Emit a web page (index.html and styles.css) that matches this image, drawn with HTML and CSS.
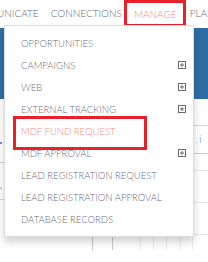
FILE: index.html
```html
<!DOCTYPE html>
<html>
<head>
<meta charset="utf-8">
<link rel="stylesheet" href="styles.css">
</head>
<body>
<div class="page">
  <nav class="topnav">
    <span class="nav-item first">UNICATE</span>
    <span class="nav-item">CONNECTIONS</span>
    <span class="nav-item active">MANAGE</span>
    <span class="nav-item">PLANS</span>
  </nav>
  <div class="banner"></div>
  <div class="content">
    <div class="col-left">
      <div class="lrow lr1"><span class="dot"></span></div>
      <div class="lrow lr2"><span class="caret">ʌ</span></div>
    </div>
    <div class="col-mid">
      <div class="mid-fill"></div>
      <div class="grid-row">
        <span class="cell c1"></span>
        <span class="cell c2 dark"></span>
        <span class="cell c3 dark"></span>
        <span class="cell c4"></span>
        <span class="cell c5"></span>
        <span class="cell c6"></span>
        <span class="cell c7"></span>
        <span class="cell c8"></span>
      </div>
    </div>
    <div class="col-right">
      <div class="rrow r1"></div>
      <div class="rrow r2"><span class="info">:i</span></div>
      <div class="rrow r3 strong"></div>
      <div class="rrow r4"></div>
      <div class="rrow r5"></div>
    </div>
  </div>

  <ul class="dropdown">
    <li class="menu-item">OPPORTUNITIES</li>
    <li class="menu-item">CAMPAIGNS<svg class="plus" viewBox="0 0 8 8" width="8" height="8"><rect x="0.5" y="0.5" width="7" height="7" fill="none" stroke="#6a6a6a"/><path d="M2 4H6M4 2V6" stroke="#6a6a6a" stroke-width="1"/></svg></li>
    <li class="menu-item">WEB<svg class="plus" viewBox="0 0 8 8" width="8" height="8"><rect x="0.5" y="0.5" width="7" height="7" fill="none" stroke="#6a6a6a"/><path d="M2 4H6M4 2V6" stroke="#6a6a6a" stroke-width="1"/></svg></li>
    <li class="menu-item">EXTERNAL TRACKING<svg class="plus" viewBox="0 0 8 8" width="8" height="8"><rect x="0.5" y="0.5" width="7" height="7" fill="none" stroke="#6a6a6a"/><path d="M2 4H6M4 2V6" stroke="#6a6a6a" stroke-width="1"/></svg></li>
    <li class="menu-item highlighted">MDF FUND REQUEST</li>
    <li class="menu-item">MDF APPROVAL<svg class="plus" viewBox="0 0 8 8" width="8" height="8"><rect x="0.5" y="0.5" width="7" height="7" fill="none" stroke="#6a6a6a"/><path d="M2 4H6M4 2V6" stroke="#6a6a6a" stroke-width="1"/></svg></li>
    <li class="menu-item">LEAD REGISTRATION REQUEST</li>
    <li class="menu-item">LEAD REGISTRATION APPROVAL</li>
    <li class="menu-item">DATABASE RECORDS</li>
  </ul>
</div>
</body>
</html>
```

FILE: styles.css
```css
* { box-sizing: border-box; }
html, body { margin: 0; padding: 0; background: #fff; }
body {
  width: 208px;
  height: 262px;
  overflow: hidden;
  font-family: "Lato", "Liberation Sans", sans-serif;
  font-weight: 300;
}
.page {
  position: relative;
  width: 208px;
  height: 262px;
  overflow: hidden;
}
.topnav {
  display: flex;
  align-items: stretch;
  height: 28px;
  white-space: nowrap;
  margin-left: -3px;
}
.nav-item {
  display: flex;
  align-items: center;
  padding: 0 7px 1px;
  font-size: 10px;
  color: #66666f;
  height: 27px;
}
.nav-item.first { padding-left: 0; padding-right: 5px; }
.nav-item.active {
  color: #f08a86;
  border: 3px solid #e8202a;
  padding: 0 6px 0 7px;
  margin: 0 -3px 0 -5px;
}
.banner {
  height: 71px;
  background: linear-gradient(90deg, #2f6ea6 0%, #3675ad 50%, #2e6ba3 100%);
}
.content {
  display: flex;
  height: 163px;
}
.col-left { width: 4px; display: flex; flex-direction: column; }
.lrow { border-bottom: 1px solid #d4d4d4; position: relative; }
.lr1 { height: 64px; }
.lr2 { height: 37px; }
.dot { display: block; width: 2px; height: 2px; background: #6a8fc8; margin-top: 43px; }
.caret { display: block; font-size: 6px; color: #555; line-height: 6px; margin-top: 22px; margin-left: -1px; }
.col-mid { width: 190px; display: flex; flex-direction: column; }
.mid-fill { height: 138px; }
.grid-row { display: flex; height: 13px; }
.cell { display: block; height: 13px; border-left: 1px solid #ececec; }
.cell.dark { border-left-color: #c8c8c8; }
.c1 { width: 88px; border-left: none; }
.c2 { width: 20px; }
.c3 { width: 28px; }
.c4 { width: 13px; }
.c5 { width: 13px; }
.c6 { width: 14px; }
.c7 { width: 12px; }
.c8 { width: 2px; }
.col-right { width: 14px; display: flex; flex-direction: column; }
.rrow { border-bottom: 1px solid #e6e6e6; }
.r1 { height: 27px; border-bottom-color: #d8d8d8; }
.r2 { height: 28px; border-bottom-color: #cfcfcf; position: relative; }
.r3 { height: 17px; }
.r4 { height: 32px; }
.r5 { height: 32px; }
.info {
  display: block;
  font-size: 11px;
  color: #3b8fd0;
  padding-left: 1px;
  padding-top: 8px;
  line-height: 11px;
  font-family: "DejaVu Sans", sans-serif;
}
.dropdown {
  position: absolute;
  left: 4px;
  top: 25px;
  width: 190px;
  height: 212px;
  margin: 0;
  padding: 6px 0 7px;
  list-style: none;
  background: #fff;
  border: 1px solid #dcdcdc;
  box-shadow: 0 5px 8px rgba(0, 0, 0, 0.18);
}
.menu-item {
  position: relative;
  display: flex;
  align-items: center;
  justify-content: space-between;
  height: 22px;
  padding: 0 7px 0 16px;
  font-size: 9.5px;
  color: #6c6c76;
  white-space: nowrap;
}
.plus { display: block; }
.menu-item.highlighted { color: #f28a84; }
.menu-item.highlighted::after {
  content: "";
  position: absolute;
  left: 8px;
  top: -4px;
  width: 128px;
  height: 28px;
  border: 3px solid #e8202a;
}
```
